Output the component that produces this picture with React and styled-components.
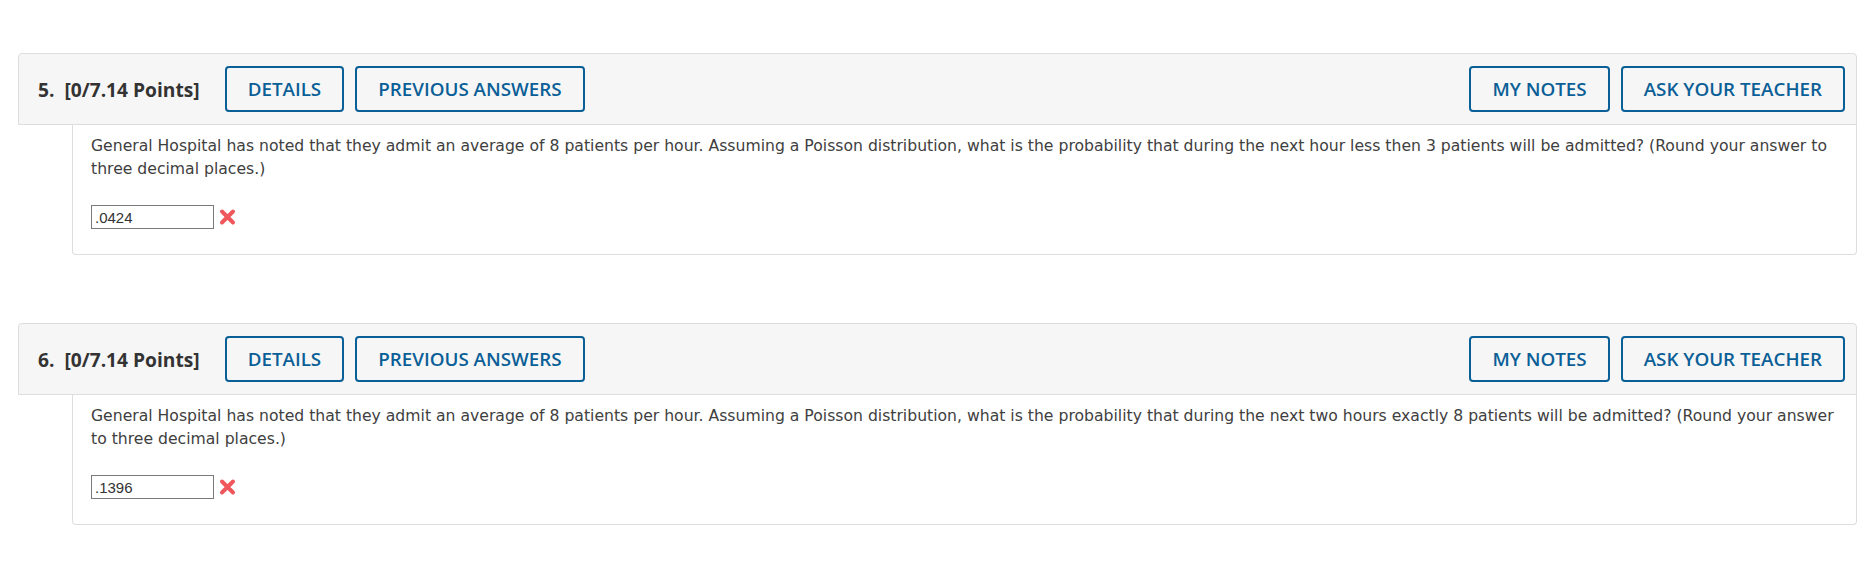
import React from "react";
import styled, { createGlobalStyle } from "styled-components";

const GlobalStyle = createGlobalStyle`
  html, body {
    margin: 0;
    padding: 0;
    background: #ffffff;
  }
`;

const Page = styled.div`
  display: flex;
  flex-direction: column;
  gap: 68px;
  padding: 53px 16px 40px 18px;
`;

const Question = styled.section`
  display: flex;
  flex-direction: column;
`;

const Header = styled.div`
  display: flex;
  align-items: center;
  height: 70px;
  padding: 0 11px 0 19px;
  background: #f6f6f6;
  border: 1px solid #dddddd;
  border-radius: 4px 4px 0 0;
`;

const Label = styled.div`
  font-family: "Open Sans", "Liberation Sans", sans-serif;
  font-weight: 700;
  font-size: 19.2px;
  color: #333333;
  white-space: pre;
  margin-right: 25px;
`;

const Group = styled.div`
  display: flex;
  gap: 11px;
  margin-left: ${({ $right }) => ($right ? "auto" : "0")};
`;

const Button = styled.button`
  height: 46px;
  padding: 0 21px;
  background: transparent;
  border: 2px solid #0b5f97;
  border-radius: 4px;
  color: #0b5f97;
  font-family: "Open Sans", "Liberation Sans", sans-serif;
  font-weight: 600;
  font-size: 18.8px;
  text-transform: uppercase;
  cursor: pointer;
`;

const Body = styled.div`
  margin-left: 54px;
  padding: 9px 8px 25px 18px;
  border: 1px solid #dddddd;
  border-top: none;
  border-radius: 0 0 4px 4px;
`;

const Prompt = styled.p`
  margin: 0 0 25px;
  font-family: "DejaVu Sans", Verdana, sans-serif;
  font-size: 15.65px;
  line-height: 23px;
  color: #404040;
`;

const AnswerRow = styled.div`
  display: flex;
  align-items: center;
  gap: 4px;
`;

const AnswerBox = styled.input`
  box-sizing: border-box;
  width: 123px;
  height: 24px;
  padding: 0 3px;
  border: 1px solid #7a7a7a;
  border-radius: 0;
  font-family: "Liberation Sans", Arial, sans-serif;
  font-size: 15px;
  color: #333333;
  background: #ffffff;
`;

const Wrong = () => (
  <svg width="19" height="18" viewBox="0 0 19 18">
    <path
      d="M4 3.5 L15 14.5 M15 3.5 L4 14.5"
      stroke="#ef575c"
      strokeWidth="4"
      strokeLinecap="round"
    />
  </svg>
);

const questions = [
  {
    num: 5,
    points: "[0/7.14 Points]",
    text:
      "General Hospital has noted that they admit an average of 8 patients per hour. Assuming a Poisson distribution, what is the probability that during the next hour less then 3 patients will be admitted? (Round your answer to three decimal places.)",
    answer: ".0424",
  },
  {
    num: 6,
    points: "[0/7.14 Points]",
    text:
      "General Hospital has noted that they admit an average of 8 patients per hour. Assuming a Poisson distribution, what is the probability that during the next two hours exactly 8 patients will be admitted? (Round your answer to three decimal places.)",
    answer: ".1396",
  },
];

const App = () => (
  <>
    <GlobalStyle />
    <Page>
      {questions.map((q) => (
        <Question key={q.num}>
          <Header>
            <Label>{`${q.num}.  ${q.points}`}</Label>
            <Group>
              <Button>Details</Button>
              <Button>Previous Answers</Button>
            </Group>
            <Group $right>
              <Button>My Notes</Button>
              <Button>Ask Your Teacher</Button>
            </Group>
          </Header>
          <Body>
            <Prompt>{q.text}</Prompt>
            <AnswerRow>
              <AnswerBox defaultValue={q.answer} readOnly />
              <Wrong />
            </AnswerRow>
          </Body>
        </Question>
      ))}
    </Page>
  </>
);

export default App;
